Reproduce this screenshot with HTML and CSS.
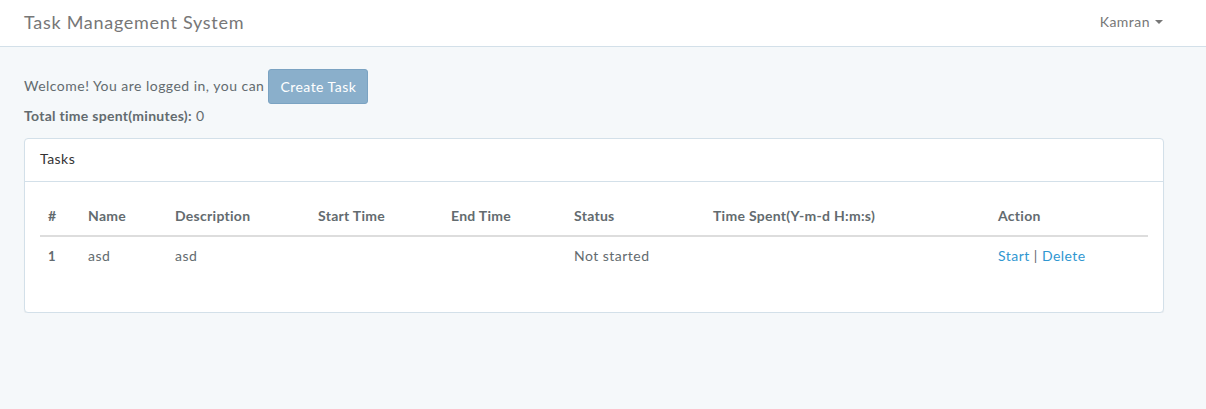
FILE: index.html
```html
<!DOCTYPE html>
<html lang="en">
<head>
<meta charset="utf-8">
<title>Task Management System</title>
<link rel="stylesheet" href="styles.css">
</head>
<body>
<nav class="navbar">
  <div class="nav-inner">
    <a class="brand" href="#">Task Management System</a>
    <a class="user" href="#">Kamran <span class="caret"></span></a>
  </div>
</nav>
<main class="main">
  <div class="welcome">
    <span>Welcome! You are logged in, you can</span>
    <a class="btn" href="#">Create Task</a>
  </div>
  <p class="total"><strong>Total time spent(minutes):</strong> 0</p>
  <section class="panel">
    <div class="panel-heading">Tasks</div>
    <div class="panel-body">
      <table class="table">
        <colgroup>
          <col class="c1"><col class="c2"><col class="c3"><col class="c4"><col class="c5"><col class="c6"><col class="c7"><col class="c8">
        </colgroup>
        <thead>
          <tr>
            <th>#</th><th>Name</th><th>Description</th><th>Start Time</th><th>End Time</th><th>Status</th><th>Time Spent(Y-m-d H:m:s)</th><th>Action</th>
          </tr>
        </thead>
        <tbody>
          <tr>
            <th class="num">1</th><td>asd</td><td>asd</td><td></td><td></td><td>Not started</td><td></td>
            <td><a href="#">Start</a> | <a href="#">Delete</a></td>
          </tr>
        </tbody>
      </table>
    </div>
  </section>
</main>
</body>
</html>
```
FILE: styles.css
```css
* { box-sizing: border-box; }
html, body { margin: 0; }
body {
  background: #f5f8fa;
  font-family: Lato, "Open Sans", sans-serif;
  font-size: 14px;
  line-height: 1.6;
  color: #636b6f;
  letter-spacing: 0.034em;
}
a { text-decoration: none; }
.navbar {
  background: #fff;
  border-bottom: 1px solid #d3e0e9;
  height: 47px;
}
.nav-inner {
  width: 1170px;
  margin: 0 0 0 9px;
  padding: 0 15px;
  height: 46px;
  display: flex;
  align-items: center;
  justify-content: space-between;
}
.brand {
  font-size: 18px;
  color: #777;
  line-height: 20px;
  padding-bottom: 2px;
  letter-spacing: 0.04em;
}
.user {
  color: #777;
  font-size: 14px;
  display: flex;
  align-items: center;
  padding-right: 1px;
  padding-bottom: 2px;
}
.caret {
  display: inline-block;
  width: 0;
  height: 0;
  margin-left: 5px;
  border-top: 4px solid #777;
  border-left: 4px solid transparent;
  border-right: 4px solid transparent;
}
.main {
  width: 1140px;
  margin: 22px 0 0 24px;
}
.welcome {
  display: flex;
  align-items: center;
  gap: 4px;
}
.btn {
  display: inline-block;
  background: #8aafcb;
  border: 1px solid #7ba3c2;
  color: #fff;
  border-radius: 3px;
  padding: 6px 11px;
  font-size: 14px;
  line-height: 21px;
}
.total {
  margin: 0 0 11px;
  padding-top: 1px;
}
.total strong { font-weight: 700; letter-spacing: 0.02em; }
.panel {
  background: #fff;
  border: 1px solid #d3e0e9;
  border-radius: 4px;
  box-shadow: 0 1px 1px rgba(0,0,0,.05);
}
.panel-heading {
  padding: 9px 15px;
  border-bottom: 1px solid #d3e0e9;
  color: #333;
  height: 43px;
}
.panel-body {
  padding: 15px;
}
.table {
  width: 1108px;
  border-collapse: collapse;
  table-layout: fixed;
  margin-bottom: 22px;
}
.c1 { width: 40px; }
.c2 { width: 87px; }
.c3 { width: 143px; }
.c4 { width: 133px; }
.c5 { width: 123px; }
.c6 { width: 139px; }
.c7 { width: 285px; }
.c8 { width: 158px; }
.table th, .table td {
  text-align: left;
  padding: 8px;
  line-height: 22px;
  vertical-align: top;
}
.table thead th {
  font-weight: 700;
  border-bottom: 2px solid #ddd;
  vertical-align: bottom;
  letter-spacing: 0.02em;
}
.table tbody th, .table tbody td {
  border-top: 1px solid #ddd;
}
.table thead + tbody tr:first-child th,
.table thead + tbody tr:first-child td { border-top: 0; }
.table .num { font-weight: 700; font-size: 13px; }
.table a { color: #3097d1; }
```
